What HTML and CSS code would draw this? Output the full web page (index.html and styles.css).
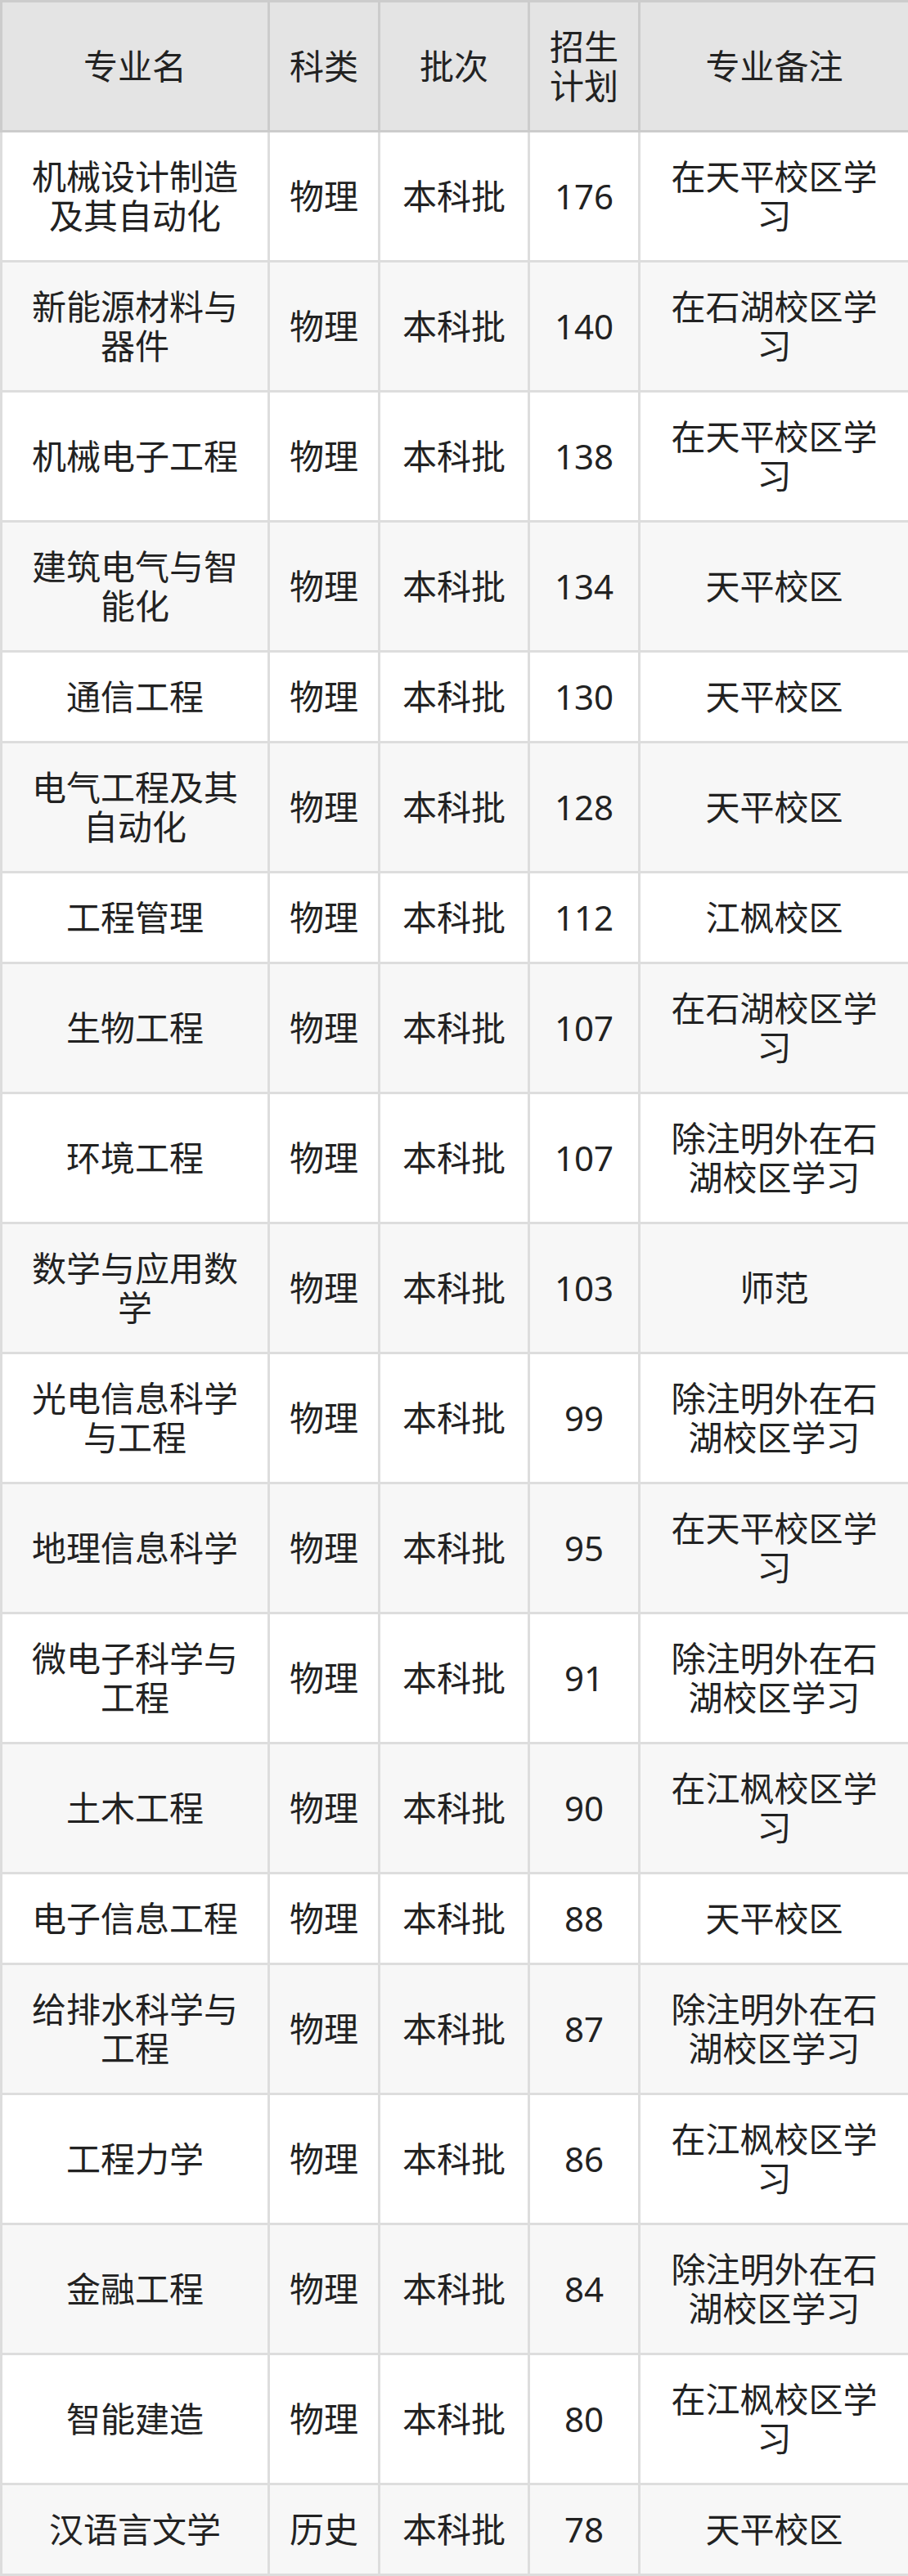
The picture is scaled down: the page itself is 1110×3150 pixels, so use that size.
FILE: index.html
```html
<!DOCTYPE html>
<html lang="zh-CN">
<head>
<meta charset="utf-8">
<title>专业招生计划</title>
<link rel="stylesheet" href="styles.css">
</head>
<body>
<table class="plan">
  <colgroup>
    <col class="c-name">
    <col class="c-type">
    <col class="c-batch">
    <col class="c-num">
    <col class="c-note">
  </colgroup>
  <thead>
    <tr><th>专业名</th><th>科类</th><th>批次</th><th>招生计划</th><th>专业备注</th></tr>
  </thead>
  <tbody>
    <tr><td>机械设计制造及其自动化</td><td>物理</td><td>本科批</td><td>176</td><td>在天平校区学习</td></tr>
    <tr><td>新能源材料与器件</td><td>物理</td><td>本科批</td><td>140</td><td>在石湖校区学习</td></tr>
    <tr><td>机械电子工程</td><td>物理</td><td>本科批</td><td>138</td><td>在天平校区学习</td></tr>
    <tr><td>建筑电气与智能化</td><td>物理</td><td>本科批</td><td>134</td><td>天平校区</td></tr>
    <tr><td>通信工程</td><td>物理</td><td>本科批</td><td>130</td><td>天平校区</td></tr>
    <tr><td>电气工程及其自动化</td><td>物理</td><td>本科批</td><td>128</td><td>天平校区</td></tr>
    <tr><td>工程管理</td><td>物理</td><td>本科批</td><td>112</td><td>江枫校区</td></tr>
    <tr><td>生物工程</td><td>物理</td><td>本科批</td><td>107</td><td>在石湖校区学习</td></tr>
    <tr><td>环境工程</td><td>物理</td><td>本科批</td><td>107</td><td>除注明外在石湖校区学习</td></tr>
    <tr><td>数学与应用数学</td><td>物理</td><td>本科批</td><td>103</td><td>师范</td></tr>
    <tr><td>光电信息科学与工程</td><td>物理</td><td>本科批</td><td>99</td><td>除注明外在石湖校区学习</td></tr>
    <tr><td>地理信息科学</td><td>物理</td><td>本科批</td><td>95</td><td>在天平校区学习</td></tr>
    <tr><td>微电子科学与工程</td><td>物理</td><td>本科批</td><td>91</td><td>除注明外在石湖校区学习</td></tr>
    <tr><td>土木工程</td><td>物理</td><td>本科批</td><td>90</td><td>在江枫校区学习</td></tr>
    <tr><td>电子信息工程</td><td>物理</td><td>本科批</td><td>88</td><td>天平校区</td></tr>
    <tr><td>给排水科学与工程</td><td>物理</td><td>本科批</td><td>87</td><td>除注明外在石湖校区学习</td></tr>
    <tr><td>工程力学</td><td>物理</td><td>本科批</td><td>86</td><td>在江枫校区学习</td></tr>
    <tr><td>金融工程</td><td>物理</td><td>本科批</td><td>84</td><td>除注明外在石湖校区学习</td></tr>
    <tr><td>智能建造</td><td>物理</td><td>本科批</td><td>80</td><td>在江枫校区学习</td></tr>
    <tr><td>汉语言文学</td><td>历史</td><td>本科批</td><td>78</td><td>天平校区</td></tr>
  </tbody>
</table>
</body>
</html>
```
FILE: styles.css
```css
html, body {
  margin: 0;
  padding: 0;
  background: #ffffff;
}

.plan {
  width: 1110px;
  border-collapse: collapse;
  table-layout: fixed;
  font-family: "Noto Sans", "Noto Sans CJK SC", sans-serif;
  font-size: 42px;
  line-height: 48px;
  color: #222222;
}

.c-name { width: 327px; }
.c-type { width: 135px; }
.c-batch { width: 183px; }
.c-num { width: 135px; }
.c-note { width: 330px; }

.plan th,
.plan td {
  padding: 30px 20px;
  text-align: center;
  vertical-align: middle;
  font-weight: normal;
  word-break: break-all;
}

.plan th {
  background: #e4e4e4;
  border: 3px solid #cccccc;
}

.plan td {
  border: 3px solid #dddddd;
}

.plan tbody tr:nth-child(even) td {
  background: #f7f7f7;
}
```
